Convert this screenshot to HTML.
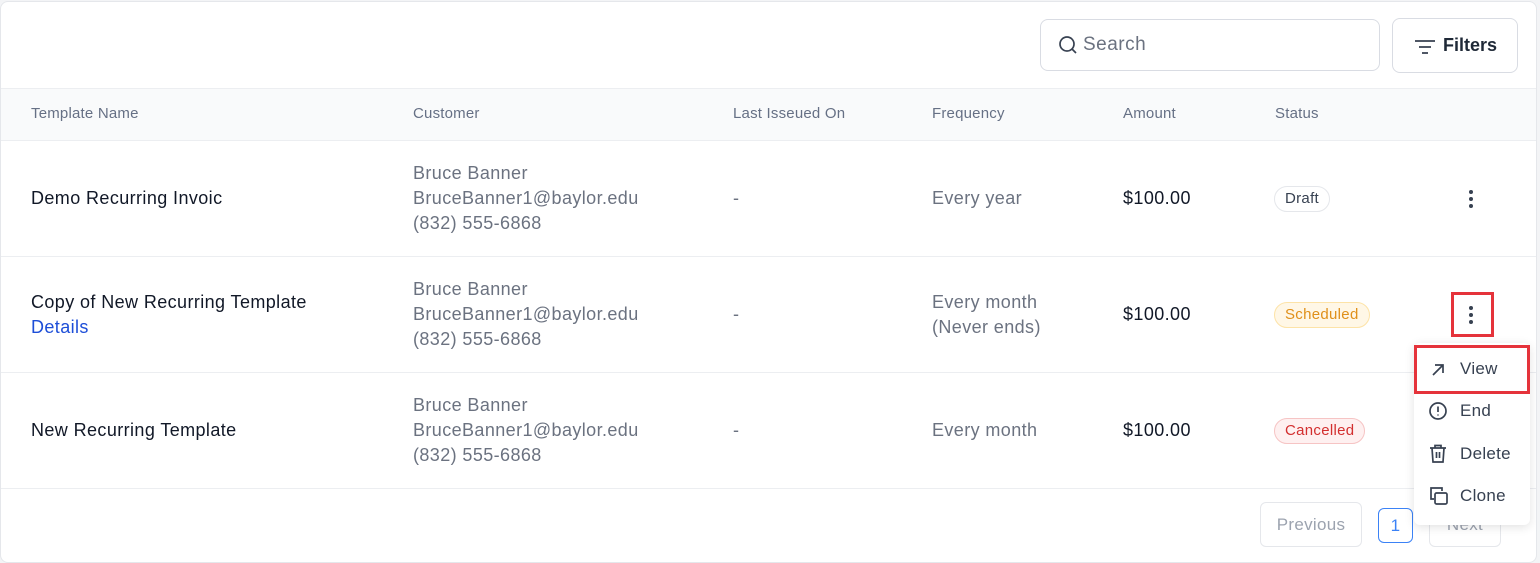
<!DOCTYPE html>
<html><head><meta charset="utf-8">
<style>
*{box-sizing:border-box;margin:0;padding:0}
body{width:1540px;height:562px;background:#f3f4f6;font-family:"Liberation Sans",sans-serif;position:relative;overflow:hidden}
.card{position:absolute;left:0;top:1px;width:1537px;height:562px;background:#fff;border:1px solid #e5e7eb;border-radius:8px;overflow:hidden}
.abs{position:absolute}
.search{left:1039px;top:17px;width:340px;height:52px;border:1px solid #d9dce3;border-radius:8px}
.filters{left:1391px;top:16px;width:126px;height:55px;border:1px solid #d9dce3;border-radius:8px}
.thead{left:0;top:86px;width:100%;height:53px;background:#f9fafb;border-top:1px solid #eceef1;border-bottom:1px solid #eceef1}
.th{position:absolute;top:103px;font-size:15px;letter-spacing:0.2px;color:#667085}
.row{position:absolute;left:0;width:100%;height:116px;border-bottom:1px solid #eceef1}
.t{position:absolute;font-size:18px;line-height:25px;letter-spacing:0.4px}
.dark{color:#111827}.grey{color:#6b7280}
.badge{position:absolute;height:26px;border-radius:13px;font-size:15px;line-height:24px;padding:0 10px;border:1px solid;letter-spacing:0.3px}
.kebab{position:absolute;width:4px;height:4px;border-radius:2px;background:#374151}
.menu{left:1413px;top:341px;width:116px;height:182px;background:#fff;border-radius:6px;box-shadow:0 2px 10px rgba(0,0,0,.12)}
.mi{position:absolute;left:46px;font-size:17px;color:#374151;letter-spacing:0.3px}
.btn{position:absolute;border:1px solid #e5e7eb;border-radius:6px;font-size:17px;color:#9ca3af;text-align:center;letter-spacing:0.3px}
</style></head><body>
<div class="card">
<div class="abs search">
<svg class="abs" style="left:17px;top:15px" width="20" height="20" viewBox="0 0 20 20" fill="none" stroke="#374151" stroke-width="1.7"><circle cx="9" cy="9" r="7"/><path d="M14 14l4 4"/></svg>
<span class="abs" style="left:42px;top:14px;font-size:19px;color:#6b7280;letter-spacing:0.5px">Search</span></div>
<div class="abs filters">
<svg class="abs" style="left:21px;top:19px" width="22" height="18" viewBox="0 0 22 18" stroke="#374151" stroke-width="1.8"><path d="M1 3h20M5 9h12M8 15h6"/></svg>
<span class="abs" style="left:50px;top:16px;font-size:18px;color:#1f2937;font-weight:bold">Filters</span></div>
<div class="abs thead"></div>
<span class="th" style="left:30px">Template Name</span>
<span class="th" style="left:412px">Customer</span>
<span class="th" style="left:732px">Last Isseued On</span>
<span class="th" style="left:931px">Frequency</span>
<span class="th" style="left:1122px">Amount</span>
<span class="th" style="left:1274px">Status</span>

<div class="row" style="top:139px"></div>
<div class="row" style="top:255px"></div>
<div class="row" style="top:371px"></div>

<div class="t dark" style="left:30px;top:184px">Demo Recurring Invoic</div>
<div class="t grey" style="left:412px;top:159px">Bruce Banner<br>BruceBanner1@baylor.edu<br>(832) 555-6868</div>
<div class="t grey" style="left:732px;top:184px">-</div>
<div class="t grey" style="left:931px;top:184px">Every year</div>
<div class="t dark" style="left:1122px;top:184px">$100.00</div>
<div class="badge" style="left:1273px;top:184px;background:#fff;border-color:#e5e7eb;color:#374151">Draft</div>
<div class="kebab" style="left:1468px;top:188px"></div><div class="kebab" style="left:1468px;top:195px"></div><div class="kebab" style="left:1468px;top:202px"></div>

<div class="t dark" style="left:30px;top:288px">Copy of New Recurring Template</div>
<div class="t" style="left:30px;top:313px;color:#1d4ed8">Details</div>
<div class="t grey" style="left:412px;top:275px">Bruce Banner<br>BruceBanner1@baylor.edu<br>(832) 555-6868</div>
<div class="t grey" style="left:732px;top:300px">-</div>
<div class="t grey" style="left:931px;top:288px">Every month<br>(Never ends)</div>
<div class="t dark" style="left:1122px;top:300px">$100.00</div>
<div class="badge" style="left:1273px;top:300px;background:#fff7e6;border-color:#fde3a7;color:#e0901a">Scheduled</div>
<div class="abs" style="left:1450px;top:290px;width:43px;height:45px;border:3px solid #e5333b"></div>
<div class="kebab" style="left:1468px;top:304px"></div><div class="kebab" style="left:1468px;top:311px"></div><div class="kebab" style="left:1468px;top:318px"></div>

<div class="t dark" style="left:30px;top:416px">New Recurring Template</div>
<div class="t grey" style="left:412px;top:391px">Bruce Banner<br>BruceBanner1@baylor.edu<br>(832) 555-6868</div>
<div class="t grey" style="left:732px;top:416px">-</div>
<div class="t grey" style="left:931px;top:416px">Every month</div>
<div class="t dark" style="left:1122px;top:416px">$100.00</div>
<div class="badge" style="left:1273px;top:416px;background:#fef0f0;border-color:#f6c4c4;color:#d32f2f">Cancelled</div>

<div class="btn" style="left:1259px;top:500px;width:102px;height:45px;line-height:43px">Previous</div>
<div class="btn" style="left:1428px;top:500px;width:72px;height:45px;line-height:43px">Next</div>
<div class="btn" style="left:1377px;top:506px;width:35px;height:35px;line-height:33px;border-color:#3b82f6;color:#3b82f6">1</div>

<div class="abs menu">
<div class="abs" style="left:0;top:2px;width:116px;height:49px;border:3px solid #e5333b"></div>
<svg class="abs" style="left:17px;top:20px" width="14" height="14" viewBox="0 0 14 14" fill="none" stroke="#374151" stroke-width="1.7"><path d="M2 12L12 2M4 2h8v8"/></svg>
<span class="mi" style="top:16px">View</span>
<svg class="abs" style="left:14px;top:58px" width="20" height="20" viewBox="0 0 20 20" fill="none" stroke="#374151" stroke-width="1.7"><circle cx="10" cy="10" r="8"/><path d="M10 5.5v5.5M10 13.5v1"/></svg>
<span class="mi" style="top:58px">End</span>
<svg class="abs" style="left:15px;top:101px" width="18" height="20" viewBox="0 0 18 20" fill="none" stroke="#374151" stroke-width="1.7"><path d="M1 4h16M6 4V1.5h6V4M3 4l1 14h10l1-14M7.5 8v6M10.5 8v6"/></svg>
<span class="mi" style="top:101px">Delete</span>
<svg class="abs" style="left:15px;top:143px" width="20" height="20" viewBox="0 0 20 20" fill="none" stroke="#374151" stroke-width="1.7"><path d="M13 5V2H2v11h3"/><rect x="6" y="7" width="12" height="11" rx="1.5"/></svg>
<span class="mi" style="top:143px">Clone</span>
</div>
</div>
</body></html>
